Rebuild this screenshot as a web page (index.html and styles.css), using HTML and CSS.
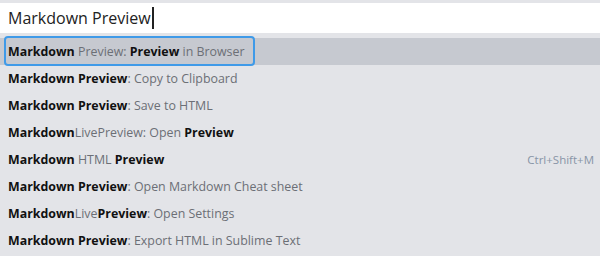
FILE: index.html
```html
<!DOCTYPE html>
<html lang="en">
<head>
    <meta charset="UTF-8">
    <title>Command Palette</title>
    <link rel="stylesheet" href="styles.css">
</head>
<body>
    <div class="palette">
        <div class="search">
            <span class="query">Markdown Preview</span><span class="caret"></span>
        </div>

        <ul class="results">
            <li class="item selected"><span class="label"><b>Markdown</b> Preview: <b>Preview</b> in Browser</span></li>
            <li class="item"><span class="label"><b>Markdown Preview</b>: Copy to Clipboard</span></li>
            <li class="item"><span class="label"><b>Markdown Preview</b>: Save to HTML</span></li>
            <li class="item"><span class="label"><b>Markdown</b>LivePreview: Open <b>Preview</b></span></li>
            <li class="item"><span class="label"><b>Markdown</b> HTML <b>Preview</b></span><span class="shortcut">Ctrl+Shift+M</span></li>
            <li class="item"><span class="label"><b>Markdown Preview</b>: Open Markdown Cheat sheet</span></li>
            <li class="item"><span class="label"><b>Markdown</b>Live<b>Preview</b>: Open Settings</span></li>
            <li class="item"><span class="label"><b>Markdown Preview</b>: Export HTML in Sublime Text</span></li>
        </ul>
    </div>
</body>
</html>
```

FILE: styles.css
```css
body {
    margin: 0;
    padding: 0;
    background: #e3e4e8;
    font-family: "Open Sans", "Noto Sans", Arial, sans-serif;
}

.palette {
    width: 600px;
    height: 256px;
    overflow: hidden;
    padding-top: 3px;
}

.search {
    height: 30px;
    background: #ffffff;
    display: flex;
    align-items: center;
    padding-left: 8px;
}

    .search .query {
        font-size: 16px;
        color: #222;
    }

    .search .caret {
        width: 2px;
        height: 22px;
        background: #222;
        margin-left: 1px;
    }

.results {
    list-style: none;
    margin: 5px 0 0 0;
    padding: 0;
}

.item {
    height: 27px;
    display: flex;
    align-items: center;
    justify-content: space-between;
    padding: 0 6px 0 8px;
    font-size: 12.4px;
    color: #6c6f76;
    box-sizing: border-box;
    position: relative;
}

    .item b {
        color: #111;
        font-weight: 700;
    }

    .item.selected {
        background: #c6c9d0;
    }

        .item.selected::after {
            content: "";
            position: absolute;
            left: 4px;
            top: -2px;
            width: 251px;
            height: 30px;
            box-sizing: border-box;
            border: 2px solid #3f9ae8;
            border-radius: 4px;
        }

.shortcut {
    font-size: 11.5px;
    color: #8894a6;
}
```
